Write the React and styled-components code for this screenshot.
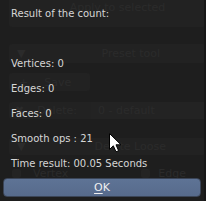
import React from "react";
import styled, { createGlobalStyle } from "styled-components";

const Global = createGlobalStyle`
	html, body {
		margin: 0;
		padding: 0;
		background: #1e1e1e;
		overflow: hidden;
	}
	body {
		font-family: "DejaVu Sans", "Liberation Sans", sans-serif;
		font-size: 10px;
	}
`;

const Screen = styled.div`
	position: relative;
	width: 206px;
	height: 201px;
	overflow: hidden;
	background: #1e1e1e;
`;

/* faint panel that shows through the popup */
const Panel = styled.div`
	display: flex;
	flex-direction: column;
	padding-left: 9px;
	color: #2b2b2b;
	font-size: 11px;
`;

const GhostBox = styled.div`
	display: flex;
	align-items: ${(p) => p.$align || "center"};
	justify-content: ${(p) => p.$justify || "flex-start"};
	height: ${(p) => p.$h}px;
	margin-top: ${(p) => p.$mt}px;
	width: ${(p) => p.$w || "auto"};
	background: ${(p) => (p.$flat ? "transparent" : "#222222")};
	border-radius: 3px;
	padding-left: ${(p) => p.$pl || 0}px;
	box-sizing: border-box;
`;

const GhostText = styled.span`
	margin-left: ${(p) => p.$ml || 0}px;
	white-space: nowrap;
`;

const GhostField = styled.div`
	flex: 1;
	height: 100%;
	display: flex;
	align-items: center;
	padding-left: 7px;
	margin-left: ${(p) => p.$ml || 0}px;
	background: #232323;
`;

const GhostCheck = styled.span`
	width: 9px;
	height: 9px;
	border-radius: 2px;
	background: #242424;
	display: inline-block;
	margin-left: ${(p) => p.$ml || 0}px;
`;

/* popup */
const Popup = styled.div`
	position: absolute;
	inset: 0;
	display: flex;
	flex-direction: column;
	padding: 1px 3px 0 3px;
	box-sizing: border-box;
	color: #d6d6d6;
	border-right: 2px solid #171717;
`;

const Line = styled.div`
	height: 25px;
	line-height: 25px;
	padding-left: 8px;
	white-space: nowrap;
`;

const OkButton = styled.div`
	margin-top: 2px;
	height: 19px;
	border-radius: 4px;
	background: linear-gradient(#5e7395, #576b8c);
	border: 1px solid #3b4557;
	box-sizing: border-box;
	display: flex;
	align-items: center;
	justify-content: center;
	color: #efefef;
	font-size: 11px;
	u {
		text-decoration-thickness: 1px;
		text-underline-offset: 2px;
	}
`;

const Cursor = styled.svg`
	position: absolute;
	left: 109px;
	top: 133px;
`;

export default function App() {
	return (
		<Screen>
			<Global />
			<Panel>
				<GhostBox $h={39} $mt={-12} $justify="center" $align="center">
					<GhostText $ml={20}>Apply to selected</GhostText>
				</GhostBox>
				<GhostBox $h={19} $mt={17} $pl={8}>
					<span>▼</span>
					<GhostText $ml={76}>Preset tool</GhostText>
				</GhostBox>
				<GhostBox $h={18} $mt={10} $w="81px" $pl={10}>
					<span>+</span>
					<GhostText $ml={16}>Save</GhostText>
				</GhostBox>
				<GhostBox $h={17} $mt={11} $pl={6}>
					<span>✖</span>
					<GhostText $ml={13}>Delete:</GhostText>
					<GhostField $ml={14}>0 - default</GhostField>
				</GhostBox>
				<GhostBox $h={17} $mt={19} $pl={8}>
					<span>▼</span>
					<GhostText $ml={69}>Delete Loose</GhostText>
				</GhostBox>
				<GhostBox $h={14} $mt={11} $flat $pl={3}>
					<GhostCheck />
					<GhostText $ml={12}>Vertex</GhostText>
					<GhostCheck $ml={73} />
					<GhostText $ml={8}>Edge</GhostText>
				</GhostBox>
			</Panel>
			<Popup>
				<Line>Result of the count:</Line>
				<Line />
				<Line>Vertices: 0</Line>
				<Line>Edges: 0</Line>
				<Line>Faces: 0</Line>
				<Line>Smooth ops : 21</Line>
				<Line>Time result: 00.05 Seconds</Line>
				<OkButton>
					<span>
						<u>O</u>K
					</span>
				</OkButton>
			</Popup>
			<Cursor width="13" height="20" viewBox="0 0 13 20">
				<path
					d="M0.5 0.5 L0.5 16.5 L4.3 12.8 L7 18.8 L9.6 17.7 L7 11.8 L12 11.8 Z"
					fill="#ffffff"
					stroke="#000000"
					strokeWidth="1"
					strokeLinejoin="round"
				/>
			</Cursor>
		</Screen>
	);
}
